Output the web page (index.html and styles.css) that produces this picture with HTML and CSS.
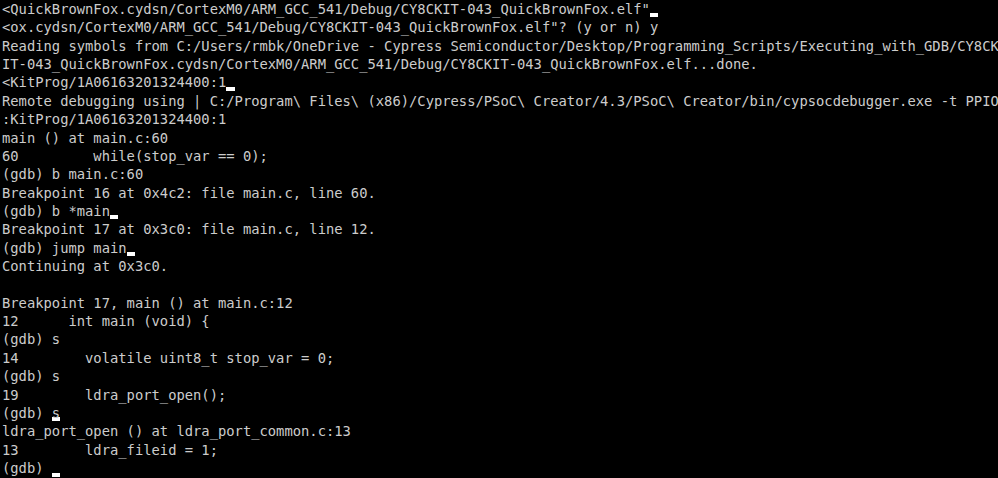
FILE: index.html
```html
<!DOCTYPE html>
<html>
<head>
<meta charset="utf-8">
<link rel="stylesheet" href="styles.css">
</head>
<body>
<div class="term">
<div class="ln">&lt;QuickBrownFox.cydsn/CortexM0/ARM_GCC_541/Debug/CY8CKIT-043_QuickBrownFox.elf"<span class="cur"> </span></div>
<div class="ln">&lt;ox.cydsn/CortexM0/ARM_GCC_541/Debug/CY8CKIT-043_QuickBrownFox.elf"? (y or n) y</div>
<div class="ln">Reading symbols from C:/Users/rmbk/OneDrive - Cypress Semiconductor/Desktop/Programming_Scripts/Executing_with_GDB/CY8CK</div>
<div class="ln">IT-043_QuickBrownFox.cydsn/CortexM0/ARM_GCC_541/Debug/CY8CKIT-043_QuickBrownFox.elf...done.</div>
<div class="ln">&lt;KitProg/1A06163201324400:1<span class="cur"> </span></div>
<div class="ln">Remote debugging using | C:/Program\ Files\ (x86)/Cypress/PSoC\ Creator/4.3/PSoC\ Creator/bin/cypsocdebugger.exe -t PPIO</div>
<div class="ln">:KitProg/1A06163201324400:1</div>
<div class="ln">main () at main.c:60</div>
<div class="ln">60         while(stop_var == 0);</div>
<div class="ln">(gdb) b main.c:60</div>
<div class="ln">Breakpoint 16 at 0x4c2: file main.c, line 60.</div>
<div class="ln">(gdb) b *main<span class="cur"> </span></div>
<div class="ln">Breakpoint 17 at 0x3c0: file main.c, line 12.</div>
<div class="ln">(gdb) jump main<span class="cur"> </span></div>
<div class="ln">Continuing at 0x3c0.</div>
<div class="ln"> </div>
<div class="ln">Breakpoint 17, main () at main.c:12</div>
<div class="ln">12      int main (void) {</div>
<div class="ln">(gdb) s</div>
<div class="ln">14        volatile uint8_t stop_var = 0;</div>
<div class="ln">(gdb) s</div>
<div class="ln">19        ldra_port_open();</div>
<div class="ln">(gdb) <span class="cur">s</span></div>
<div class="ln">ldra_port_open () at ldra_port_common.c:13</div>
<div class="ln">13        ldra_fileid = 1;</div>
<div class="ln">(gdb) <span class="cur"> </span></div>
</div>
</body>
</html>
```
FILE: styles.css
```css
html, body {
  margin: 0;
  padding: 0;
  background: #000;
  width: 998px;
  height: 478px;
  overflow: hidden;
}

.term {
  padding: 0 0 0 2px;
  font-family: "DejaVu Sans Mono", "Liberation Mono", monospace;
  font-size: 13.8px;
  line-height: 18.36px;
  color: #cccccc;
  overflow: hidden;
  width: 996px;
  height: 478px;
}

.ln {
  height: 18.36px;
  white-space: pre;
  overflow: hidden;
}

.cur {
  display: inline-block;
  width: 1ch;
  height: 18.36px;
  vertical-align: top;
  background: linear-gradient(to bottom, transparent 13.5px, #ffffff 13.5px, #ffffff 17.5px, transparent 17.5px);
}
```
